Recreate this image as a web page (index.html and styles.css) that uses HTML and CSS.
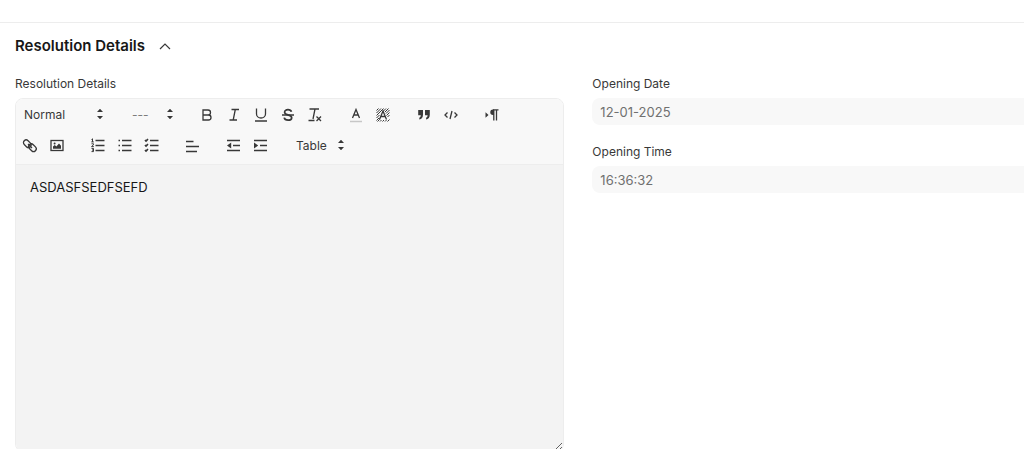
FILE: index.html
```
<!DOCTYPE html>
<html lang="en">
  <head>
    <meta charset="utf-8" />
    <title>Resolution Details</title>
    <link rel="stylesheet" href="styles.css" />
  </head>
  <body>
    <section class="form-section">
      <h2 class="section-head">
        Resolution Details
        <svg class="chevron" viewBox="0 0 12 12"><path d="M1 9 6 4l5 5" /></svg>
      </h2>
      <div class="section-body">
        <div class="form-column">
          <label class="control-label" for="resolution">Resolution Details</label>
          <div class="editor">
            <div class="toolbar">
              <span class="picker picker-header">
                <select aria-label="Heading"><option>Normal</option></select>
                <svg viewBox="0 0 18 18"><path d="M9 3.8 12 7H6zM9 14.2 12 11H6z" /></svg>
              </span>
              <span class="picker picker-size">
                <select aria-label="Size"><option>---</option></select>
                <svg viewBox="0 0 18 18"><path d="M9 3.8 12 7H6zM9 14.2 12 11H6z" /></svg>
              </span>
              <span class="formats">
                <button type="button" aria-label="Bold">
                  <svg viewBox="0 0 18 18"><path d="M5 4h5a2.5 2.5 0 0 1 0 5H5zM5 9h5.500a2.500 2.500 0 0 1 0 5H5z" /></svg>
                </button>
                <button type="button" aria-label="Italic">
                  <svg viewBox="0 0 18 18"><path d="M6.500 3.500H14M4.500 14H12M10.300 3.500 8.200 14" /></svg>
                </button>
                <button type="button" aria-label="Underline">
                  <svg viewBox="0 0 18 18"><path d="M4.500 2.500v5.500a4.500 4 0 0 0 9 0V2.500M3 15h12" /></svg>
                </button>
                <button type="button" aria-label="Strike">
                  <svg viewBox="0 0 18 18">
                    <path class="bold" d="M12.500 5.800C12 4.400 10.800 3.700 9 3.700c-2 0-3.400.9-3.400 2.500C5.600 8 7.200 8.400 9 8.900c2 .5 3.700 1 3.700 2.800 0 1.600-1.500 2.500-3.600 2.500-2.200 0-3.600-.9-3.900-2.500" />
                    <path d="M3 9h12" />
                  </svg>
                </button>
                <button type="button" aria-label="Clear formatting">
                  <svg viewBox="0 0 18 18"><path d="M3.500 3H13M9 3 7 13M2.500 14.500h6M10.500 10.500l4.500 4.500M15 10.500l-4.500 4.500" /></svg>
                </button>
              </span>
              <span class="formats">
                <button type="button" aria-label="Text color">
                  <svg viewBox="0 0 18 18">
                    <path class="light" d="M3 15.500h12" />
                    <path d="M5.500 12 9 3.500l3.500 8.500M6.600 9h4.800" />
                  </svg>
                </button>
                <button type="button" aria-label="Background color">
                  <svg viewBox="0 0 18 18">
                    <path class="thin" d="M2.500 4.500l2-2M2.500 7l4.500-4.500M2.500 9.500l7-7M2.500 12l3-3M9 5.500l3-3M2.500 14.500l2.500-2.500M11 6l3.500-3.500M12 7.500l3.500-3.500M12.500 9.500l3-3M3.500 15.500l2-2M13.500 11l2-2M6 15.500l1.500-1.500M8.500 15.500l1.500-1.500M11 15.500l1.500-1.500M13.500 15.500l2-2" />
                    <path d="M5.500 13.500 9 5l3.500 8.500M6.600 10.500h4.800" />
                  </svg>
                </button>
              </span>
              <span class="formats">
                <button type="button" aria-label="Blockquote">
                  <svg viewBox="0 0 18 18">
                    <path class="solid" d="M3.200 4h4.800v4.400c0 2.900-1.300 4.700-3.700 5v-1.700c1-.5 1.500-1.300 1.500-2.500H3.200zM10 4h4.800v4.400c0 2.900-1.300 4.700-3.700 5v-1.700c1-.5 1.500-1.300 1.500-2.500H10z" />
                  </svg>
                </button>
                <button type="button" aria-label="Code block">
                  <svg viewBox="0 0 18 18"><path d="M5.500 6.500 3 9l2.500 2.500M12.500 6.500 15 9l-2.500 2.500M10 5 8 13" /></svg>
                </button>
              </span>
              <span class="formats">
                <button type="button" aria-label="Text direction">
                  <svg viewBox="0 0 18 18">
                    <path class="solid" d="M2.500 6.300 5.500 9l-3 2.700zM11 3.500H10a2.700 2.700 0 0 0 0 5.500h1z" />
                    <path d="M10 3.800h5.500M10.800 4v10.500M13.500 4v10.500" />
                  </svg>
                </button>
              </span>
              <span class="formats">
                <button type="button" aria-label="Link">
                  <svg viewBox="0 0 18 18">
                    <rect x="2" y="4" width="8.500" height="5.400" rx="2.700" transform="rotate(45 6.250 6.700)" />
                    <rect x="7.200" y="8" width="8.500" height="5.400" rx="2.700" transform="rotate(45 11.450 10.700)" />
                    <path d="M7 7l4 4" />
                  </svg>
                </button>
                <button type="button" aria-label="Image">
                  <svg viewBox="0 0 18 18">
                    <rect x="3" y="3.500" width="12" height="10" />
                    <path class="solid" d="M5 11.700V9.500l1.800-1.500L8.300 9.500 11 6.500l2 2.200v3z" />
                    <circle class="solid" cx="6.600" cy="6.400" r="1" />
                  </svg>
                </button>
              </span>
              <span class="formats">
                <button type="button" aria-label="Ordered list">
                  <svg viewBox="0 0 18 18">
                    <path d="M6.500 3.500h9M6.500 8.500h9M6.500 13.500h9" />
                    <path class="thin" d="M2.500 2.500l1-.7v3.100M2.300 4.900h2.500M2.500 6.800h2v1L2.500 9.600h2.300M2.500 11.400h2V13H3.300h1.200v1.600h-2" />
                  </svg>
                </button>
                <button type="button" aria-label="Bullet list">
                  <svg viewBox="0 0 18 18">
                    <path d="M6 3.500h9.500M6 8.500h9.500M6 13.500h9.500" />
                    <path d="M2.500 3.500H4M2.500 8.500H4M2.500 13.500H4" />
                  </svg>
                </button>
                <button type="button" aria-label="Check list">
                  <svg viewBox="0 0 18 18">
                    <path d="M7 3.500h8.500M7 8.500h8.500M7 13.500h8.500" />
                    <path class="bold" d="M2 3l1 1 2-2M2 8l1 1 2-2M2 13l1 1 2-2" />
                  </svg>
                </button>
              </span>
              <span class="formats">
                <button type="button" aria-label="Align">
                  <svg viewBox="0 0 18 18"><path d="M2 4.500h7.500M2 9.500h13M2 14.500h11" /></svg>
                </button>
              </span>
              <span class="formats">
                <button type="button" aria-label="Outdent">
                  <svg viewBox="0 0 18 18">
                    <path d="M2 3.500h13M8 8.500h7M2 13.500h13" />
                    <path class="solid" d="M6.200 5.500v6L2 8.500z" />
                  </svg>
                </button>
                <button type="button" aria-label="Indent">
                  <svg viewBox="0 0 18 18">
                    <path d="M2 3.500h13M8 8.500h7M2 13.500h13" />
                    <path class="solid" d="M2 5.500v6l4.200-3z" />
                  </svg>
                </button>
              </span>
              <span class="picker picker-table">
                <select aria-label="Table"><option>Table</option></select>
                <svg viewBox="0 0 18 18"><path d="M9 3.800 12 7H6zM9 14.200 12 11H6z" /></svg>
              </span>
            </div>
            <textarea class="editor-text" id="resolution" readonly>ASDASFSEDFSEFD</textarea>
          </div>
        </div>
        <div class="form-column">
          <label class="control-label" for="opening-date">Opening Date</label>
          <input class="control-input" id="opening-date" type="text" value="12-01-2025" readonly />
          <label class="control-label" for="opening-time">Opening Time</label>
          <input class="control-input" id="opening-time" type="text" value="16:36:32" readonly />
        </div>
      </div>
    </section>
  </body>
</html>
```
FILE: styles.css
```
* {
  box-sizing: border-box;
}

body {
  margin: 0;
  padding-top: 22px;
  overflow: hidden;
  background: #fff;
  color: #383838;
  font-family: Inter, "Liberation Sans", sans-serif;
  font-size: 12px;
}

.form-section {
  border-top: 1px solid #ededed;
  padding: 12px 0 0 15px;
}

.section-head {
  display: flex;
  align-items: center;
  gap: 14px;
  margin: 0 0 17px;
  color: #171717;
  font-size: 15px;
  font-weight: 600;
  line-height: 22px;
}

.chevron {
  width: 12px;
  height: 12px;
  fill: none;
  stroke: #383838;
  stroke-width: 1.2;
}

.section-body {
  display: grid;
  grid-template-columns: 14fr 11fr;
  gap: 28px;
}

.control-label {
  display: block;
  margin-bottom: 5px;
  color: #383838;
  line-height: 19px;
}

.control-input {
  display: block;
  width: 100%;
  height: 27px;
  margin-bottom: 17px;
  padding: 0 8px;
  border: 0;
  border-radius: 8px 0 0 8px;
  background: #f8f8f8;
  color: #707070;
  font: inherit;
  font-size: 13px;
}

.editor {
  border: 1px solid #ededed;
  border-radius: 8px;
  overflow: hidden;
}

.toolbar {
  display: flex;
  flex-wrap: wrap;
  column-gap: 14px;
  padding-bottom: 3px;
  border-bottom: 1px solid #ededed;
  background: #f8f8f8;
}

.formats {
  display: flex;
}

.formats button {
  display: flex;
  align-items: center;
  justify-content: center;
  width: 27px;
  height: 31px;
  padding: 0;
  border: 0;
  background: none;
}

.formats svg {
  width: 18px;
  height: 18px;
  fill: none;
  stroke: #383838;
  stroke-width: 1.3;
}

.formats .bold {
  stroke-width: 1.7;
}

.formats .thin {
  stroke-width: 1;
}

.formats .light {
  stroke: #c7c7c7;
  stroke-width: 1.5;
}

.formats .solid {
  fill: #383838;
  stroke: none;
}

.picker {
  position: relative;
  height: 31px;
}

.picker-header {
  width: 93px;
}

.picker-size {
  width: 56px;
}

.picker-table {
  width: 62px;
}

.picker select {
  appearance: none;
  width: 100%;
  height: 100%;
  padding: 0 8px;
  border: 0;
  background: none;
  color: #383838;
  font: inherit;
}

.picker-size select {
  padding-left: 9px;
  color: #7c7c7c;
}

.picker svg {
  position: absolute;
  top: 6px;
  right: 0;
  width: 18px;
  height: 18px;
  fill: #383838;
  pointer-events: none;
}

.editor-text {
  display: block;
  width: 100%;
  height: 286px;
  padding: 12px 14px;
  border: 0;
  background: #f3f3f3;
  color: #171717;
  font: inherit;
  font-size: 13px;
  line-height: 20px;
  resize: vertical;
}
```
